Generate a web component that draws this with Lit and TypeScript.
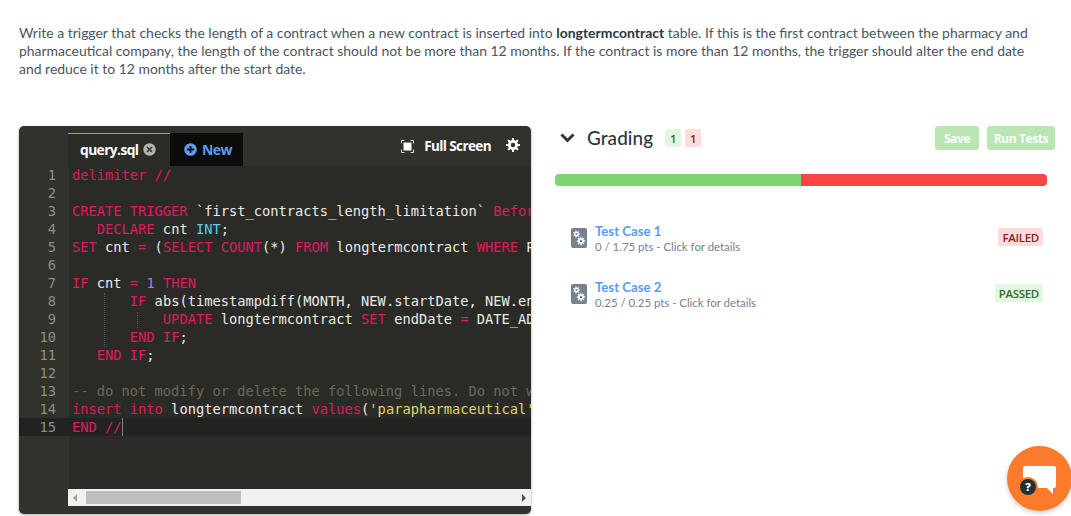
import { LitElement, html, css } from "lit";
import { customElement } from "lit/decorators.js";

function gear(cx: number, cy: number, ro: number, ri: number, hole: number, n: number) {
  let d = "";
  const step = (Math.PI * 2) / n;
  for (let i = 0; i < n; i++) {
    const a = i * step;
    const pts: [number, number][] = [
      [ri, a - step * 0.5],
      [ri, a - step * 0.28],
      [ro, a - step * 0.18],
      [ro, a + step * 0.18],
      [ri, a + step * 0.28],
    ];
    for (const [r, t] of pts) {
      d += `${d ? "L" : "M"}${(cx + r * Math.cos(t)).toFixed(2)} ${(cy + r * Math.sin(t)).toFixed(2)}`;
    }
  }
  d += "Z";
  d += `M${cx + hole} ${cy}A${hole} ${hole} 0 1 0 ${cx - hole} ${cy}A${hole} ${hole} 0 1 0 ${cx + hole} ${cy}Z`;
  return d;
}

type Tok = [string, string?];
const K = "k", C = "c", T = "t", N = "n", S = "s";
const lines: Tok[][] = [
  [["delimiter //", K]],
  [],
  [["CREATE TRIGGER", K], [" `first_contracts_length_limitation` "], ["Before INSERT ON", K]],
  [["   "], ["DECLARE", K], [" cnt "], ["INT", T], [";"]],
  [["SET", K], [" cnt "], ["=", K], [" ("], ["SELECT COUNT", K], ["(*) "], ["FROM", K], [" longtermcontract "], ["WHERE", K], [" PharmacyName"]],
  [],
  [["IF", K], [" cnt "], ["=", K], [" "], ["1", N], [" "], ["THEN", K]],
  [["       "], ["IF", K], [" abs(timestampdiff(MONTH, NEW.startDate, NEW.endDate))"]],
  [["           "], ["UPDATE", K], [" longtermcontract "], ["SET", K], [" endDate "], ["=", K], [" DATE_ADD(NEW"]],
  [["       "], ["END IF", K], [";"]],
  [["   "], ["END IF", K], [";"]],
  [],
  [["-- do not modify or delete the following lines. Do not write", C]],
  [["insert into", K], [" longtermcontract "], ["values", K], ["("], ["'parapharmaceutical'", S], [", "]],
  [["END //", K]],
];

@customElement("app-root")
export class AppRoot extends LitElement {
  static styles = css`
    :host {
      display: block;
      width: 1071px;
      height: 516px;
      overflow: hidden;
      position: relative;
      background: #fff;
      font-family: "Lato", "Open Sans", sans-serif;
      color: #2c3640;
    }
    .prompt {
      margin: 0;
      padding: 24px 19px 48px;
      font-size: 13.96px;
      line-height: 18px;
      color: #4a5560;
      white-space: nowrap;
    }
    .prompt b {
      color: #2c3640;
      font-weight: 700;
    }
    .columns {
      display: flex;
      padding-left: 19px;
      gap: 24px;
      align-items: flex-start;
    }
    .editor {
      width: 512px;
      height: 388px;
      background: #31322c;
      border-radius: 5px;
      box-shadow: 0 1px 3px rgba(0, 0, 0, 0.35);
      overflow: hidden;
      display: flex;
      flex-direction: column;
      flex: none;
    }
    .tabbar {
      height: 40px;
      flex: none;
      display: flex;
      align-items: flex-end;
      padding-left: 49px;
      padding-right: 11px;
      font-family: "Open Sans", sans-serif;
      font-weight: 700;
      font-size: 13.8px;
      letter-spacing: -0.6px;
      color: #fff;
    }
    .tab {
      height: 33px;
      box-sizing: border-box;
      display: flex;
      align-items: center;
      border-top: 1px solid #e08a45;
      background: #2b2c27;
      width: 102px;
      padding-left: 12px;
      padding-bottom: 2px;
      gap: 5px;
    }
    .tab.new {
      border-top: 1px solid #0b0b0a;
      background: #0b0b0a;
      width: 73px;
      padding-left: 14px;
      gap: 5px;
      color: #5b9cf0;
      font-size: 14px;
    }
    .tools {
      margin-left: auto;
      align-self: stretch;
      display: flex;
      align-items: center;
      gap: 15px;
    }
    .tools .fs {
      display: flex;
      align-items: center;
      gap: 10px;
      font-size: 13.5px;
    }
    .tools svg {
      display: block;
    }
    .tools .cog {
      margin-bottom: 3px;
    }
    .code-area {
      height: 323px;
      flex: none;
      position: relative;
      overflow: hidden;
      background: linear-gradient(to right, #31322c 50px, #2a2b26 50px);
      font-family: "DejaVu Sans Mono", monospace;
      font-size: 13.72px;
      line-height: 18px;
    }
    .line {
      display: flex;
      height: 18px;
      white-space: pre;
    }
    .line.active {
      background: #222320;
    }
    .num {
      width: 37px;
      flex: none;
      text-align: right;
      color: #8d8e88;
    }
    .text {
      padding-left: 16px;
      color: #ecece6;
    }
    .k { color: #e0195f; }
    .c { color: #6b6a58; }
    .t { color: #5ccfe6; }
    .n { color: #a07ee8; }
    .s { color: #e3d36c; }
    .cursor {
      display: inline-block;
      width: 1px;
      height: 18px;
      vertical-align: top;
      background: #85867f;
    }
    .guide {
      position: absolute;
      width: 0;
      border-left: 1px dotted #55564f;
    }
    .scrollbar {
      height: 17px;
      flex: none;
      margin-left: 49px;
      background: #f1f1f1;
      display: flex;
      align-items: center;
      padding: 0 5px;
      gap: 9px;
    }
    .thumb {
      width: 155px;
      height: 13px;
      background: #bfbfbf;
    }
    .arrow {
      width: 0;
      height: 0;
      border-top: 4px solid transparent;
      border-bottom: 4px solid transparent;
    }
    .arrow.l { border-right: 4px solid #a0a0a0; }
    .arrow.r { border-left: 4px solid #505050; margin-left: auto; }
    .grading {
      width: 500px;
      flex: none;
    }
    .head {
      display: flex;
      align-items: center;
      height: 24px;
    }
    .chev {
      margin-left: 5px;
      margin-right: 12px;
      display: block;
      flex: none;
    }
    .title {
      font-size: 18.9px;
      font-weight: 500;
      color: #2c3640;
      margin-right: 12px;
      letter-spacing: 0.1px;
      padding-bottom: 1px;
    }
    .count {
      width: 16px;
      height: 18px;
      border-radius: 2px;
      display: flex;
      align-items: center;
      justify-content: center;
      font-size: 11.5px;
      margin-right: 4px;
      font-family: "Open Sans", sans-serif;
      font-weight: 600;
    }
    .pass { background: #e3f6e1; color: #2f6b2a; }
    .fail { background: #ffdcdc; color: #8f1a1f; }
    .btn {
      height: 24px;
      box-sizing: border-box;
      border-radius: 3px;
      background: #b9e6b3;
      color: #fff;
      font-family: "Open Sans", sans-serif;
      font-weight: 700;
      font-size: 12px;
      letter-spacing: -0.4px;
      display: flex;
      align-items: center;
      justify-content: center;
    }
    .btn.save { width: 44px; margin-left: auto; margin-right: 8px; }
    .btn.run { width: 68px; }
    .bar {
      display: flex;
      width: 492px;
      height: 12px;
      margin-top: 24px;
      border-radius: 4px;
      overflow: hidden;
    }
    .bar i { display: block; flex: 1; }
    .bar .g { background: #7fd574; }
    .bar .r { background: #fd4444; }
    .tests {
      width: 488px;
      margin-top: 36px;
      display: flex;
      flex-direction: column;
      gap: 24px;
    }
    .test {
      display: flex;
      align-items: center;
      height: 32px;
      padding-left: 16px;
    }
    .ticon {
      width: 16px;
      height: 20px;
      margin-right: 8px;
      flex: none;
      display: block;
    }
    .tname {
      color: #5b9cf0;
      font-size: 13.2px;
      font-weight: 700;
      line-height: 16px;
    }
    .tsub {
      color: #75828f;
      font-size: 11.4px;
      line-height: 15px;
    }
    .status {
      margin-left: auto;
      height: 18px;
      margin-bottom: 2px;
      padding: 0 4px;
      border-radius: 2px;
      display: flex;
      align-items: center;
      font-family: "Open Sans", sans-serif;
      font-size: 11.5px;
      font-weight: 600;
      letter-spacing: -0.3px;
    }
    .chat {
      position: absolute;
      left: 1007px;
      top: 446px;
      width: 65px;
      height: 65px;
      border-radius: 50%;
      background: #fb7a2b;
      box-shadow: 0 2px 5px rgba(0, 0, 0, 0.2);
    }
    .chat svg { display: block; }
    .qmark {
      position: absolute;
      left: 13px;
      top: 33px;
      width: 16px;
      height: 16px;
      border-radius: 50%;
      background: #22303c;
      box-shadow: 0 0 0 2px #fb7a2b;
      color: #fff;
      font-family: "Open Sans", sans-serif;
      font-weight: 800;
      font-size: 11px;
      line-height: 16px;
      text-align: center;
    }
  `;

  private renderTestIcon() {
    return html`<svg class="ticon" viewBox="0 0 16 20">
      <rect x="0" y="0" width="16" height="20" rx="2" fill="#75828f"></rect>
      <path d=${gear(5.5, 6, 3.4, 2.4, 1, 7)} fill="#fff" fill-rule="evenodd"></path>
      <path d=${gear(10, 13, 4.3, 3, 1.3, 8)} fill="#fff" fill-rule="evenodd"></path>
    </svg>`;
  }

  render() {
    return html`
      <p class="prompt">Write a trigger that checks the length of a contract when a new contract is inserted into <b>longtermcontract</b> table. If this is the first contract between the pharmacy and<br />pharmaceutical company, the length of the contract should not be more than 12 months. If the contract is more than 12 months, the trigger should alter the end date<br />and reduce it to 12 months after the start date.</p>
      <div class="columns">
        <section class="editor">
          <div class="tabbar">
            <div class="tab">
              <span>query.sql</span>
              <svg width="13" height="13" viewBox="0 0 13 13">
                <circle cx="6.5" cy="6.5" r="6.2" fill="#b5b5b0"></circle>
                <path d="M4 4l5 5M9 4l-5 5" stroke="#33342e" stroke-width="1.6"></path>
              </svg>
            </div>
            <div class="tab new">
              <svg width="13" height="13" viewBox="0 0 13 13">
                <circle cx="6.5" cy="6.5" r="6.3" fill="#5b9cf0"></circle>
                <path d="M6.5 3v7M3 6.5h7" stroke="#0b0b0a" stroke-width="1.8"></path>
              </svg>
              <span>New</span>
            </div>
            <div class="tools">
              <div class="fs">
                <svg width="13" height="13" viewBox="0 0 13 13">
                  <path d="M.5 3.5v-3h3M9.5.5h3v3M12.5 9.5v3h-3M3.5 12.5h-3v-3" fill="none" stroke="#ddd" stroke-width="1"></path>
                  <rect x="2.5" y="2.5" width="8" height="8" fill="#fff"></rect>
                </svg>
                <span>Full Screen</span>
              </div>
              <svg class="cog" width="14" height="14" viewBox="0 0 14 14">
                <path d=${gear(7, 7, 7, 5, 2.2, 8)} fill="#fff" fill-rule="evenodd"></path>
              </svg>
            </div>
          </div>
          <div class="code-area">
            ${lines.map(
              (l, i) => html`<div class="line ${i === 14 ? "active" : ""}">
                <span class="num">${i + 1}</span><span class="text">${l.map(
                  ([t, c]) => html`<span class=${c ?? ""}>${t}</span>`
                )}${i === 14 ? html`<span class="cursor"></span>` : ""}</span>
              </div>`
            )}
            <span class="guide" style="left:85px;top:127px;height:54px"></span>
            <span class="guide" style="left:118px;top:146px;height:16px"></span>
          </div>
          <div class="scrollbar">
            <span class="arrow l"></span>
            <span class="thumb"></span>
            <span class="arrow r"></span>
          </div>
        </section>
        <section class="grading">
          <div class="head">
            <svg class="chev" width="15" height="10" viewBox="0 0 15 10">
              <path d="M1.5 1.5L7.5 7.5l6-6" fill="none" stroke="#2c3640" stroke-width="3"></path>
            </svg>
            <span class="title">Grading</span>
            <span class="count pass">1</span>
            <span class="count fail">1</span>
            <span class="btn save">Save</span>
            <span class="btn run">Run Tests</span>
          </div>
          <div class="bar"><i class="g"></i><i class="r"></i></div>
          <div class="tests">
            <div class="test">
              ${this.renderTestIcon()}
              <div>
                <div class="tname">Test Case 1</div>
                <div class="tsub">0 / 1.75 pts - Click for details</div>
              </div>
              <span class="status fail">FAILED</span>
            </div>
            <div class="test">
              ${this.renderTestIcon()}
              <div>
                <div class="tname">Test Case 2</div>
                <div class="tsub">0.25 / 0.25 pts - Click for details</div>
              </div>
              <span class="status pass">PASSED</span>
            </div>
          </div>
        </section>
      </div>
      <div class="chat">
        <svg width="65" height="65" viewBox="0 0 65 65">
          <path d="M18 20h29a2 2 0 0 1 2 2v18a2 2 0 0 1-2 2h-1v6l-6-6H18a2 2 0 0 1-2-2V22a2 2 0 0 1 2-2z" fill="#fff"></path>
        </svg>
        <span class="qmark">?</span>
      </div>
    `;
  }
}
